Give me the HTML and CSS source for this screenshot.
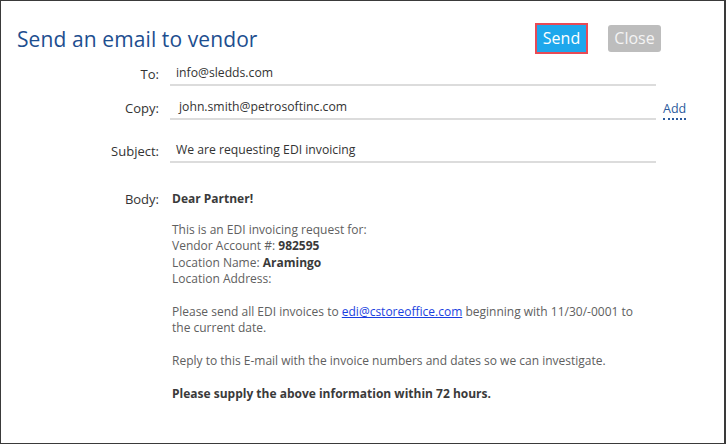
FILE: index.html
```html
<!DOCTYPE html>
<html>
<head>
<meta charset="utf-8">
<link rel="stylesheet" href="styles.css">
</head>
<body>
<div class="frame">
  <div class="header">
    <h1 class="title">Send an email to vendor</h1>
    <div class="actions">
      <button class="btn btn-send">Send</button>
      <button class="btn btn-close">Close</button>
    </div>
  </div>
  <div class="form">
    <div class="row row-to">
      <label class="label">To:</label>
      <div class="field">info@sledds.com</div>
      <div class="extra"></div>
    </div>
    <div class="row row-copy">
      <label class="label">Copy:</label>
      <div class="field field-copy">john.smith@petrosoftinc.com</div>
      <div class="extra"><a class="add">Add</a></div>
    </div>
    <div class="row row-subject">
      <label class="label">Subject:</label>
      <div class="field">We are requesting EDI invoicing</div>
      <div class="extra"></div>
    </div>
    <div class="row row-body">
      <label class="label">Body:</label>
      <div class="body-text">
        <p class="strong">Dear Partner!</p>
        <p>This is an EDI invoicing request for:<br>
        Vendor Account #: <b>982595</b><br>
        Location Name: <b>Aramingo</b><br>
        Location Address:</p>
        <p>Please send all EDI invoices to <a class="mail" href="#">edi@cstoreoffice.com</a> beginning with 11/30/-0001 to<br>the current date.</p>
        <p>Reply to this E-mail with the invoice numbers and dates so we can investigate.</p>
        <p class="strong">Please supply the above information within 72 hours.</p>
      </div>
    </div>
  </div>
</div>
</body>
</html>
```
FILE: styles.css
```css
* { box-sizing: border-box; }
html, body { margin: 0; padding: 0; background: #ffffff; }
body { font-family: "Open Sans", "Liberation Sans", sans-serif; color: #333; }

.frame {
  width: 726px;
  height: 444px;
  border: 1px solid #3a3a3a;
  border-right-width: 2px;
  padding: 0 0 0 16px;
  background: #fff;
}

.header {
  display: flex;
  align-items: center;
  height: 58px;
  padding-top: 17px;
}
.title {
  margin: 0;
  font-weight: 400;
  font-size: 21px;
  color: #1d4e8f;
  flex: 1;
  letter-spacing: 0.1px;
}
.actions {
  display: flex;
  align-items: center;
  gap: 20px;
  margin-right: 63px;
}
.btn {
  font-family: "Open Sans", "Liberation Sans", sans-serif;
  font-size: 16px;
  color: #fff;
  border: none;
  line-height: 27px;
  padding: 0;
  cursor: pointer;
}
.btn-send {
  background: #1ea7ec;
  border: 2px solid #e94a55;
  width: 53px;
  height: 31px;
}
.btn-close {
  background: #bdbdbd;
  border-radius: 3px;
  width: 53px;
  height: 27px;
  color: #f4f4f4;
}

.form { display: flex; flex-direction: column; }
.row {
  display: grid;
  grid-template-columns: 142px 486px 40px;
  column-gap: 11px;
  align-items: end;
}
.label {
  text-align: right;
  font-size: 13px;
  color: #333;
  line-height: 20px;
  padding-bottom: 2px;
}
.field {
  font-size: 12.2px;
  color: #333;
  line-height: 20px;
  height: 27px;
  padding-top: 4px;
  padding-left: 6px;
  border-bottom: 2px solid #dcdcdc;
}
.field-copy { padding-left: 9px; }
.row-copy { margin-top: 7px; }
.row-subject { margin-top: 16px; }
.row-body {
  margin-top: 28px;
  align-items: start;
}
.row-body .label { line-height: 16.5px; padding-bottom: 0; }
.extra { margin-left: -4px; }
.add {
  display: inline-block;
  font-size: 12.5px;
  color: #2b5a9c;
  line-height: 16px;
  border-bottom: 2px dotted #2b5a9c;
  padding-bottom: 1px;
}

.body-text {
  grid-column: 2 / 4;
  font-size: 12px;
  line-height: 16.4px;
  color: #606060;
  padding-left: 2px;
}
.body-text p { margin: 0 0 16.4px 0; }
.body-text p.strong { font-weight: 700; color: #3a3a3a; }
.body-text p:first-child { margin-bottom: 14.5px; }
.body-text b { color: #3a3a3a; }
.mail { color: #1a3fe0; text-decoration: underline; }
```
